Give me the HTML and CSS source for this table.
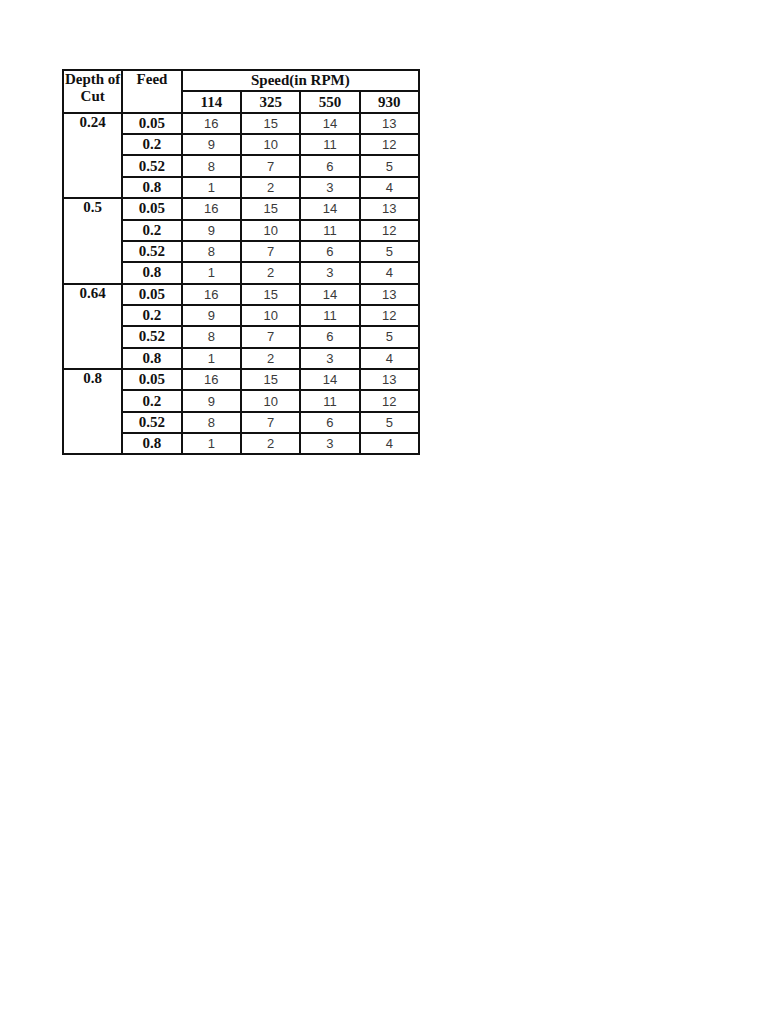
FILE: index.html
```html
<!DOCTYPE html>
<html>
<head>
<meta charset="utf-8">
<link rel="stylesheet" href="styles.css">
</head>
<body>
<table class="grid">
  <colgroup>
    <col class="c"><col class="c"><col class="c"><col class="c"><col class="c"><col class="c">
  </colgroup>
  <tr>
    <th rowspan="2" class="top two">Depth of<br>Cut</th>
    <th rowspan="2" class="top">Feed</th>
    <th colspan="4">Speed(in RPM)</th>
  </tr>
  <tr><th>114</th><th>325</th><th>550</th><th>930</th></tr>

  <tr><th rowspan="4" class="top">0.24</th><th>0.05</th><td>16</td><td>15</td><td>14</td><td>13</td></tr>
  <tr><th>0.2</th><td>9</td><td>10</td><td>11</td><td>12</td></tr>
  <tr><th>0.52</th><td>8</td><td>7</td><td>6</td><td>5</td></tr>
  <tr><th>0.8</th><td>1</td><td>2</td><td>3</td><td>4</td></tr>

  <tr><th rowspan="4" class="top">0.5</th><th>0.05</th><td>16</td><td>15</td><td>14</td><td>13</td></tr>
  <tr><th>0.2</th><td>9</td><td>10</td><td>11</td><td>12</td></tr>
  <tr><th>0.52</th><td>8</td><td>7</td><td>6</td><td>5</td></tr>
  <tr><th>0.8</th><td>1</td><td>2</td><td>3</td><td>4</td></tr>

  <tr><th rowspan="4" class="top">0.64</th><th>0.05</th><td>16</td><td>15</td><td>14</td><td>13</td></tr>
  <tr><th>0.2</th><td>9</td><td>10</td><td>11</td><td>12</td></tr>
  <tr><th>0.52</th><td>8</td><td>7</td><td>6</td><td>5</td></tr>
  <tr><th>0.8</th><td>1</td><td>2</td><td>3</td><td>4</td></tr>

  <tr><th rowspan="4" class="top">0.8</th><th>0.05</th><td>16</td><td>15</td><td>14</td><td>13</td></tr>
  <tr><th>0.2</th><td>9</td><td>10</td><td>11</td><td>12</td></tr>
  <tr><th>0.52</th><td>8</td><td>7</td><td>6</td><td>5</td></tr>
  <tr><th>0.8</th><td>1</td><td>2</td><td>3</td><td>4</td></tr>
</table>
</body>
</html>
```

FILE: styles.css
```css
html, body {
  margin: 0;
  padding: 0;
  background: #ffffff;
}

body {
  padding: 69px 0 0 62px;
}

.grid {
  border-collapse: collapse;
  table-layout: fixed;
  width: 358px;
  border: 2px solid #111;
}

.grid .c {
  width: 59.3px;
}

.grid tr {
  height: 21.36px;
}

.grid th,
.grid td {
  border: 2px solid #111;
  padding: 0;
  text-align: center;
  vertical-align: middle;
}

.grid th {
  font-family: "Liberation Serif", "Times New Roman", serif;
  font-weight: bold;
  font-size: 15px;
  line-height: 15px;
  color: #111;
}

.grid th.top {
  vertical-align: top;
  padding-top: 1px;
}

.grid th.two {
  line-height: 17px;
  padding-top: 0;
}

.grid td {
  font-family: "Liberation Sans", Arial, sans-serif;
  font-size: 13px;
  line-height: 15px;
  color: #3a3a3a;
}
```
